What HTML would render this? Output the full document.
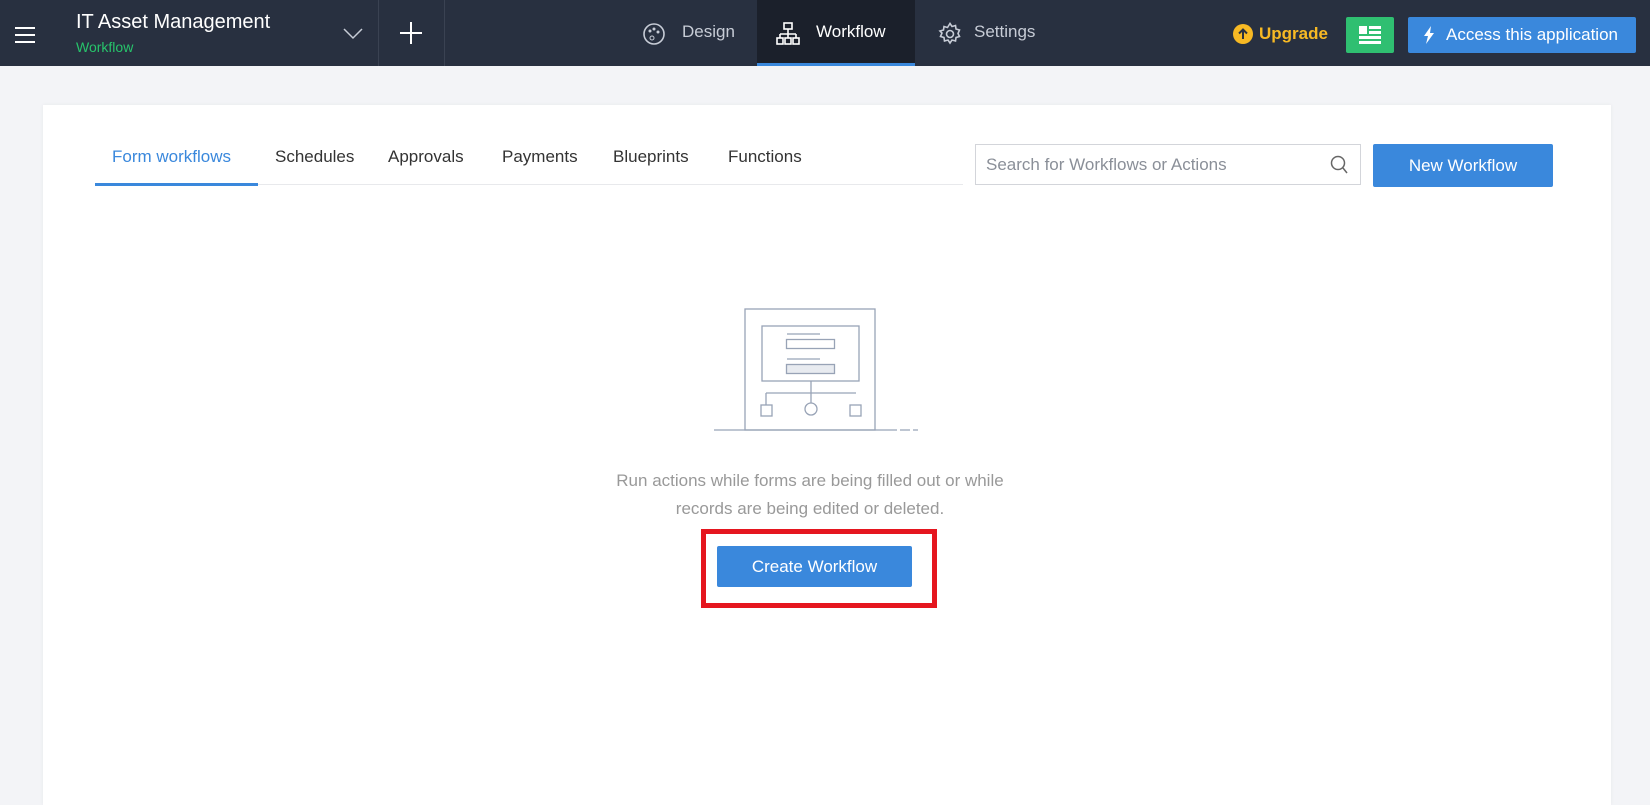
<!DOCTYPE html>
<html><head><meta charset="utf-8"><style>
*{margin:0;padding:0;box-sizing:border-box}
body{width:1650px;height:750px;background:#f3f4f7;font-family:"Liberation Sans",sans-serif;position:relative;overflow:hidden}
.hdr{position:absolute;left:0;top:0;width:1650px;height:66px;background:#283040}
.a{position:absolute}
.nav{color:#c7ccd6;font-size:17px;top:22px}
.card{position:absolute;left:43px;top:105px;width:1568px;height:700px;background:#fff;box-shadow:0 0 4px rgba(0,0,0,.05)}
.tab{position:absolute;top:147px;font-size:17px;color:#333}
</style></head><body>
<div class="hdr">
 <div class="a" style="left:15px;top:27px;width:20px;height:2px;background:#fff"></div>
 <div class="a" style="left:15px;top:34px;width:20px;height:2px;background:#fff"></div>
 <div class="a" style="left:15px;top:41px;width:20px;height:2px;background:#fff"></div>
 <div class="a" style="left:76px;top:11px;color:#fff;font-size:20px">IT Asset Management</div>
 <div class="a" style="left:76px;top:39px;color:#27c46b;font-size:14px">Workflow</div>
 <svg class="a" style="left:343px;top:28px" width="20" height="12"><path d="M1 1l9 9 9-9" stroke="#c7ccd6" stroke-width="1.5" fill="none"/></svg>
 <div class="a" style="left:378px;top:0;width:1px;height:66px;background:#3a4252"></div>
 <div class="a" style="left:444px;top:0;width:1px;height:66px;background:#3a4252"></div>
 <svg class="a" style="left:400px;top:22px" width="22" height="22"><path d="M11 0v22M0 11h22" stroke="#fff" stroke-width="2"/></svg>
 <svg class="a" style="left:642px;top:22px" width="24" height="24"><circle cx="12" cy="12" r="10" stroke="#c7ccd6" stroke-width="1.6" fill="none"/><circle cx="8" cy="9" r="1.5" fill="#c7ccd6"/><circle cx="12" cy="7" r="1.5" fill="#c7ccd6"/><circle cx="16" cy="10" r="1.5" fill="#c7ccd6"/><circle cx="10" cy="16" r="2" stroke="#c7ccd6" fill="none"/></svg>
 <div class="a nav" style="left:682px">Design</div>
 <div class="a" style="left:757px;top:0;width:158px;height:66px;background:#1b202b"></div>
 <div class="a" style="left:757px;top:63px;width:158px;height:3px;background:#3a88dc"></div>
 <svg class="a" style="left:776px;top:22px" width="24" height="24" fill="none" stroke="#fff" stroke-width="1.6"><rect x="8" y="1" width="8" height="6"/><path d="M12 7v5M4 12h16M4 12v4M12 12v4M20 12v4"/><rect x="1" y="16" width="6" height="6"/><rect x="9" y="16" width="6" height="6"/><rect x="17" y="16" width="6" height="6"/></svg>
 <div class="a nav" style="left:816px;color:#fff">Workflow</div>
 <svg class="a" style="left:938px;top:22px" width="24" height="24" fill="none" stroke="#c7ccd6" stroke-width="1.6"><circle cx="12" cy="12" r="3.5"/><path d="M12 1.5l2 3 3.5-1 .5 3.5 3.5 1-1.5 3.5 1.5 3-3.5 1-.5 3.5-3.5-1-2 3-2-3-3.5 1-.5-3.5-3.5-1 1.5-3.5L2 9l3.5-1L6 4.5l3.5 1z"/></svg>
 <div class="a nav" style="left:974px">Settings</div>
 <svg class="a" style="left:1233px;top:24px" width="20" height="20"><circle cx="10" cy="10" r="10" fill="#f7b924"/><path d="M10 15V6M6 9.5L10 5.5 14 9.5" stroke="#283040" stroke-width="2" fill="none"/></svg>
 <div class="a" style="left:1259px;top:24px;color:#f7b924;font-size:17px;font-weight:bold">Upgrade</div>
 <div class="a" style="left:1346px;top:17px;width:48px;height:36px;background:#2fbf71;border-radius:2px"></div>
 <svg class="a" style="left:1359px;top:26px" width="22" height="18" fill="#fff"><rect x="0" y="0" width="8" height="8"/><rect x="10" y="0" width="12" height="3"/><rect x="10" y="5" width="12" height="3"/><rect x="0" y="10" width="22" height="3"/><rect x="0" y="15" width="22" height="3"/></svg>
 <div class="a" style="left:1408px;top:17px;width:228px;height:36px;background:#3a88dc;border-radius:2px"></div>
 <svg class="a" style="left:1423px;top:26px" width="12" height="18"><path d="M8 0L1 10h4l-2 8 8-11H7z" fill="#fff"/></svg>
 <div class="a" style="left:1446px;top:25px;color:#fff;font-size:17px">Access this application</div>
</div>
<div class="card"></div>
<div class="tab" style="left:112px;color:#3a88dc">Form workflows</div>
<div class="tab" style="left:275px">Schedules</div>
<div class="tab" style="left:388px">Approvals</div>
<div class="tab" style="left:502px">Payments</div>
<div class="tab" style="left:613px">Blueprints</div>
<div class="tab" style="left:728px">Functions</div>
<div class="a" style="left:95px;top:184px;width:868px;height:1px;background:#e8e9ec"></div>
<div class="a" style="left:95px;top:183px;width:163px;height:3px;background:#3a88dc"></div>
<div class="a" style="left:975px;top:144px;width:386px;height:41px;border:1px solid #d3d5da;background:#fff"></div>
<div class="a" style="left:986px;top:155px;color:#8a8f98;font-size:17px">Search for Workflows or Actions</div>
<svg class="a" style="left:1330px;top:155px" width="18" height="20" fill="none" stroke="#666" stroke-width="1.5"><circle cx="8" cy="8" r="6.5"/><path d="M13 13l4 5"/></svg>
<div class="a" style="left:1373px;top:144px;width:180px;height:43px;background:#3a88dc;border-radius:2px;color:#fff;font-size:17px;text-align:center;line-height:43px">New Workflow</div>
<svg class="a" style="left:700px;top:300px" width="240" height="140" fill="none" stroke="#98a3b6" stroke-width="1.3">
 <rect x="45" y="9" width="130" height="121"/>
 <rect x="62" y="26" width="97" height="55"/>
 <path d="M87 34h33M87 59h33"/>
 <rect x="86.5" y="39.5" width="48" height="9"/>
 <rect x="86.5" y="64.5" width="48" height="9" fill="#e8ebf0"/>
 <path d="M111 81v22M66 93h90M66 93v12"/>
 <rect x="61" y="105" width="11" height="11"/>
 <circle cx="111" cy="109" r="6"/>
 <rect x="150" y="105" width="11" height="11"/>
 <path d="M14 130h183M200 130h10M213 130h5"/>
</svg>
<div class="a" style="left:560px;top:467px;width:500px;text-align:center;color:#999;font-size:17px;line-height:28px">Run actions while forms are being filled out or while<br>records are being edited or deleted.</div>
<div class="a" style="left:701px;top:529px;width:236px;height:79px;border:5px solid #e5161f"></div>
<div class="a" style="left:717px;top:546px;width:195px;height:41px;background:#3a88dc;border-radius:2px;color:#fff;font-size:17px;text-align:center;line-height:41px">Create Workflow</div>
</body></html>
